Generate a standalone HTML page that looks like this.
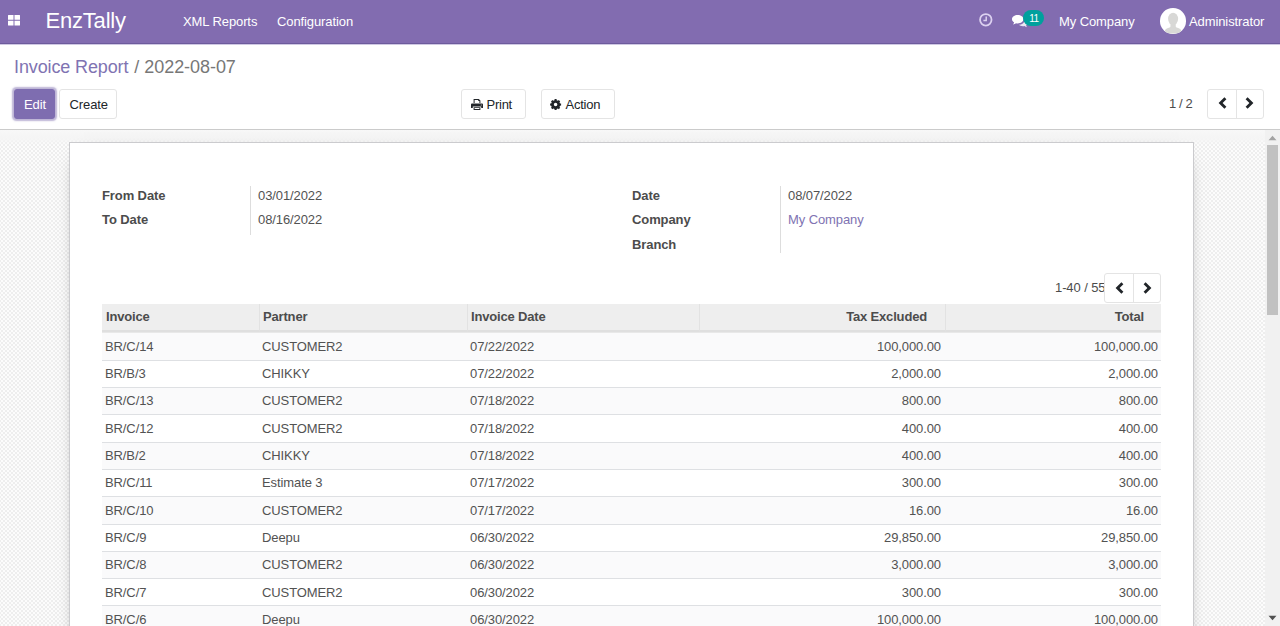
<!DOCTYPE html>
<html lang="en">
<head>
<meta charset="utf-8">
<title>Invoice Report - 2022-08-07</title>
<style>
*{box-sizing:border-box;}
html,body{margin:0;padding:0;}
body{width:1280px;height:626px;overflow:hidden;position:relative;background:#fff;
  font-family:"Liberation Sans",sans-serif;font-size:13px;line-height:20px;color:#4c4c4c;letter-spacing:-0.1px;}
a{text-decoration:none;color:#8073b2;}
svg{position:absolute;display:block;overflow:visible;}
.t{position:absolute;white-space:nowrap;}
/* ---------- navbar ---------- */
.nav{position:absolute;left:0;top:0;width:1280px;height:44px;background:#826cb0;border-bottom:1px solid #6d5b9c;color:#fff;}
.nav .t{color:#fff;top:12px;line-height:20px;}
.nav .brand{left:45.5px;top:0;line-height:41px;font-size:22px;letter-spacing:-0.2px;}
.badge{position:absolute;left:1023px;top:10px;width:21px;height:16px;border-radius:8px;background:#00a09d;color:#fff;font-size:10px;line-height:18px;text-align:center;letter-spacing:-0.6px;padding-left:0.6px;}
.avatar{position:absolute;left:1160.400px;top:8px;width:25.600px;height:25.600px;border-radius:50%;background:#fff;overflow:hidden;}
/* ---------- control panel ---------- */
.cp{position:absolute;left:0;top:44px;width:1280px;height:86px;background:#fff;border-bottom:1px solid #cbcbcb;border-top:1px solid #cfc8e3;}
.bc{position:absolute;left:14px;top:55px;font-size:18px;line-height:24px;color:#777;white-space:nowrap;letter-spacing:-0.05px;}
.bc a{color:#8073b2;letter-spacing:-0.12px;margin-right:1px;}
.btn{position:absolute;top:89px;height:30px;line-height:28px;border:1px solid #e4e4e4;border-radius:3px;background:#fff;color:#212529;font-size:13px;white-space:nowrap;}
.btn .t{top:0;line-height:29px;}
.btn-primary{background:#7e6db0;border-color:#7e6db0;color:#fff;box-shadow:0 0 1.5px 1.6px rgba(124,107,174,.5);}
.grp{position:absolute;height:30px;border:1px solid #e4e4e4;border-radius:3px;background:#fff;width:57px;}
.grp i{position:absolute;left:28px;top:0;width:1px;height:28px;background:#e4e4e4;}
/* ---------- content ---------- */
.content{position:absolute;left:0;top:130px;width:1265px;height:496px;overflow:hidden;
  background-color:#fcfcfc;
  background-image:linear-gradient(45deg,#eee 25%,transparent 25%,transparent 75%,#eee 75%),linear-gradient(45deg,#eee 25%,transparent 25%,transparent 75%,#eee 75%);
  background-size:4px 4px;background-position:-1px 0,1px 2px;}
.content .fade{position:absolute;left:0;top:0;width:100%;height:15px;background:linear-gradient(#f8f8f8,#f5f5f5 45%,rgba(245,245,245,.85) 65%,rgba(245,245,245,0));}
.sheet{position:absolute;left:69px;top:12px;width:1125px;height:600px;background:#fff;border:1px solid #cbcbce;box-shadow:0 5px 20px -15px #000;}
.lbl{position:absolute;font-weight:bold;color:#4c4c4c;white-space:nowrap;line-height:20px;}
.val{position:absolute;color:#525252;white-space:nowrap;line-height:20px;}
.vsep{position:absolute;width:1px;background:#ddd;}
/* ---------- table ---------- */
table.list{position:absolute;left:32px;top:161px;width:1059px;border-collapse:separate;border-spacing:0;table-layout:fixed;font-size:13px;color:#4c4c4c;}
table.list th{letter-spacing:-0.17px;height:28px;background:#eee;font-weight:bold;text-align:left;padding:0 4px 0 3px;border-bottom:2px solid #dfdfdf;border-left:1px solid #e2e2e2;white-space:nowrap;line-height:20px;}
table.list th:first-child{border-left:none;padding-left:4px;}
table.list th.num{padding-right:18px;}
table.list td{color:#525252;height:27.3px;padding:0.6px 4px 0 3px;border-top:1px solid #dee0e3;white-space:nowrap;line-height:20px;}
table.list tbody tr:first-child td{height:27.75px;border-top-color:#e8e8e8;}
table.list tr:nth-child(odd) td{background:#fafafb;}
table.list .num{text-align:right;}
table.list td.num:last-child{padding-right:3px;}
table.list th.num:last-child{padding-right:17px;}
/* ---------- scrollbar ---------- */
.sb{position:absolute;left:1265px;top:130px;width:15px;height:496px;background:#f1f1f1;}
.sb .thumb{position:absolute;left:2px;top:15px;width:11px;height:170px;background:#c1c1c1;}
</style>
</head>
<body>
<div class="nav">
  <svg style="left:8px;top:15.200px" width="12" height="10.500" viewBox="0 0 12 10.5"><path fill="#fff" d="M.5 0h5v4.7h-5.5v-4.2a.5.5 0 0 1 .5-.5zM6.5 0h5a.5.5 0 0 1 .5.5v4.2h-5.5zM0 5.7h5.5v4.8h-5a.5.5 0 0 1-.5-.5zM6.500 5.7h5.5v4.300a.5.5 0 0 1-.5.5h-5z"/></svg>
  <div class="t brand">EnzTally</div>
  <div class="t" style="left:183px">XML Reports</div>
  <div class="t" style="left:277px">Configuration</div>
  <!-- clock -->
  <svg style="left:979px;top:13.200px" width="13.600" height="13.600" viewBox="0 0 13 13"><circle cx="6.5" cy="6.5" r="5.5" fill="none" stroke="#dcd1f0" stroke-width="1.7"/><path d="M6.900 3.300v3.800h-2.700" fill="none" stroke="#dcd1f0" stroke-width="1.400"/></svg>
  <!-- comments -->
  <svg style="left:1011.800px;top:14.500px" width="15.300" height="13.300" viewBox="0 0 15 13"><path fill="#fff" d="M5.6 0C2.500 0 0 1.800 0 4.100c0 1.300.8 2.400 2.100 3.200-.2.700-.6 1.300-1.200 1.900 1.200-.1 2.300-.6 3.100-1.200.5.100 1 .2 1.600.2 3.100 0 5.600-1.800 5.600-4.100S8.700 0 5.600 0z"/><path fill="#fff" opacity=".85" d="M12.300 5.100c0 2.400-2.500 4.300-5.700 4.500 1 .9 2.500 1.400 4.100 1.400.5 0 1-.1 1.500-.2.700.6 1.600 1 2.700 1.100-.5-.5-.9-1.100-1.100-1.700.8-.6 1.200-1.400 1.200-2.300 0-1.200-1.100-2.300-2.700-2.800z"/></svg>
  <div class="badge">11</div>
  <div class="t" style="left:1059px">My Company</div>
  <div class="avatar"><svg style="left:0;top:0" width="25.600" height="25.600" viewBox="0 0 26 26"><ellipse cx="13.300" cy="11" rx="5.100" ry="6.300" fill="#d8d8d6"/><path fill="#d8d8d6" d="M10.600 15.500h5.400v3.200c0 .6.400 1 1 1.200 1.900.6 3.600 1.400 4.600 2.800v3.300h-16.600v-3.300c1-1.400 2.700-2.200 4.600-2.800.6-.2 1-.6 1-1.200z"/></svg></div>
  <div class="t" style="left:1189px">Administrator</div>
</div>
<div class="cp"></div>
<div class="bc"><a>Invoice Report</a> / 2022-08-07</div>
<div class="btn btn-primary" style="left:14px;width:41px"><span class="t" style="left:9px">Edit</span></div>
<div class="btn" style="left:59px;width:58px"><span class="t" style="left:9.500px">Create</span></div>
<div class="btn" style="left:461px;width:65px">
  <svg style="left:9px;top:8.600px" width="12" height="11" viewBox="0 0 12 11"><path fill="#212529" fill-rule="evenodd" d="M2.600 0h5.200l1.600 1.600v2.500h-1v-2h-1.200v-1.100h-3.600v3.100h-1zM1.100 4.500h9.800c.6 0 1.100.5 1.100 1.100v3.300h-1.800v-1.500h-8.400v1.500h-1.800v-3.300c0-.6.500-1.100 1.100-1.100zM10.200 5.400a.5.5 0 1 0 0 1 .5.5 0 0 0 0-1zM2.600 8.200h6.800v2.800h-6.800zM3.600 9.100v1h4.800v-1z"/></svg>
  <span class="t" style="left:24.500px;letter-spacing:-0.25px">Print</span></div>
<div class="btn" style="left:541px;width:74px">
  <svg style="left:8.200px;top:8.500px" width="11.200" height="11.200" viewBox="0 0 12 12"><path fill="#212529" fill-rule="evenodd" d="M10.76 4.86 L11.90 4.92 L11.90 7.08 L10.76 7.14 L10.18 8.56 L10.94 9.41 L9.41 10.94 L8.56 10.18 L7.14 10.76 L7.08 11.90 L4.92 11.90 L4.86 10.76 L3.44 10.18 L2.59 10.94 L1.06 9.41 L1.82 8.56 L1.24 7.14 L0.10 7.08 L0.10 4.92 L1.24 4.86 L1.82 3.44 L1.06 2.59 L2.59 1.06 L3.44 1.82 L4.86 1.24 L4.92 0.10 L7.08 0.10 L7.14 1.24 L8.56 1.82 L9.41 1.06 L10.94 2.59 L10.18 3.44Z M4.10 6.00 a1.90 1.90 0 1 0 3.80 0 a1.90 1.90 0 1 0 -3.80 0Z"/></svg>
  <span class="t" style="left:23.500px;letter-spacing:-0.25px">Action</span></div>
<div class="t" style="left:1169px;top:94px;word-spacing:-0.6px">1 / 2</div>
<div class="grp" style="left:1207px;top:89px"><i></i>
  <svg style="left:10px;top:7.200px" width="9" height="12" viewBox="0 0 9 12"><path fill="#212529" d="M6.4 0.2L8.400 2.200 4.600 6l3.800 3.800-2 2L.6 6z"/></svg>
  <svg style="left:37.100px;top:7.200px" width="9" height="12" viewBox="0 0 9 12"><path fill="#212529" d="M2.600 0.200L.6 2.200 4.400 6 .6 9.800l2 2L8.400 6z"/></svg>
</div>
<div class="content">
  <div class="fade"></div>
  <div class="sheet">
    <div class="lbl" style="left:32px;top:43px">From Date</div>
    <div class="lbl" style="left:32px;top:67px">To Date</div>
    <div class="val" style="left:188px;top:43px">03/01/2022</div>
    <div class="val" style="left:188px;top:67px">08/16/2022</div>
    <div class="vsep" style="left:180px;top:43px;height:49px"></div>
    <div class="lbl" style="left:562px;top:43px">Date</div>
    <div class="lbl" style="left:562px;top:67px">Company</div>
    <div class="lbl" style="left:562px;top:92px">Branch</div>
    <div class="val" style="left:718px;top:43px">08/07/2022</div>
    <div class="val" style="left:718px;top:67px"><a>My Company</a></div>
    <div class="vsep" style="left:710px;top:43px;height:67px"></div>
    <div class="t" style="left:985px;top:135px">1-40 / 55</div>
    <div class="grp" style="left:1034px;top:130px;width:57px;height:30px"><i></i>
      <svg style="left:10px;top:7.800px" width="9" height="12" viewBox="0 0 9 12"><path fill="#212529" d="M6.4 0.2L8.400 2.200 4.600 6l3.800 3.800-2 2L.6 6z"/></svg>
      <svg style="left:37.700px;top:7.800px" width="9" height="12" viewBox="0 0 9 12"><path fill="#212529" d="M2.600 0.200L.6 2.200 4.400 6 .6 9.800l2 2L8.400 6z"/></svg>
    </div>
    <table class="list">
      <colgroup><col style="width:157px"><col style="width:208px"><col style="width:232px"><col style="width:246px"><col style="width:216px"></colgroup>
      <thead><tr><th>Invoice</th><th>Partner</th><th>Invoice Date</th><th class="num">Tax Excluded</th><th class="num">Total</th></tr></thead>
      <tbody>
        <tr><td>BR/C/14</td><td>CUSTOMER2</td><td>07/22/2022</td><td class="num">100,000.00</td><td class="num">100,000.00</td></tr>
        <tr><td>BR/B/3</td><td>CHIKKY</td><td>07/22/2022</td><td class="num">2,000.00</td><td class="num">2,000.00</td></tr>
        <tr><td>BR/C/13</td><td>CUSTOMER2</td><td>07/18/2022</td><td class="num">800.00</td><td class="num">800.00</td></tr>
        <tr><td>BR/C/12</td><td>CUSTOMER2</td><td>07/18/2022</td><td class="num">400.00</td><td class="num">400.00</td></tr>
        <tr><td>BR/B/2</td><td>CHIKKY</td><td>07/18/2022</td><td class="num">400.00</td><td class="num">400.00</td></tr>
        <tr><td>BR/C/11</td><td>Estimate 3</td><td>07/17/2022</td><td class="num">300.00</td><td class="num">300.00</td></tr>
        <tr><td>BR/C/10</td><td>CUSTOMER2</td><td>07/17/2022</td><td class="num">16.00</td><td class="num">16.00</td></tr>
        <tr><td>BR/C/9</td><td>Deepu</td><td>06/30/2022</td><td class="num">29,850.00</td><td class="num">29,850.00</td></tr>
        <tr><td>BR/C/8</td><td>CUSTOMER2</td><td>06/30/2022</td><td class="num">3,000.00</td><td class="num">3,000.00</td></tr>
        <tr><td>BR/C/7</td><td>CUSTOMER2</td><td>06/30/2022</td><td class="num">300.00</td><td class="num">300.00</td></tr>
        <tr><td>BR/C/6</td><td>Deepu</td><td>06/30/2022</td><td class="num">100,000.00</td><td class="num">100,000.00</td></tr>
        <tr><td>BR/C/5</td><td>CUSTOMER2</td><td>06/30/2022</td><td class="num">500.00</td><td class="num">500.00</td></tr>
      </tbody>
    </table>
  </div>
</div>
<div class="sb"><svg style="left:0;top:0" width="15" height="496" viewBox="0 0 15 496"><path fill="#a3a3a3" d="M3.500 10.200L7.500 5.800 11.500 10.200z"/><path fill="#505050" d="M3.500 485.800L7.500 490.200 11.500 485.800z"/></svg><div class="thumb"></div></div>
</body>
</html>
